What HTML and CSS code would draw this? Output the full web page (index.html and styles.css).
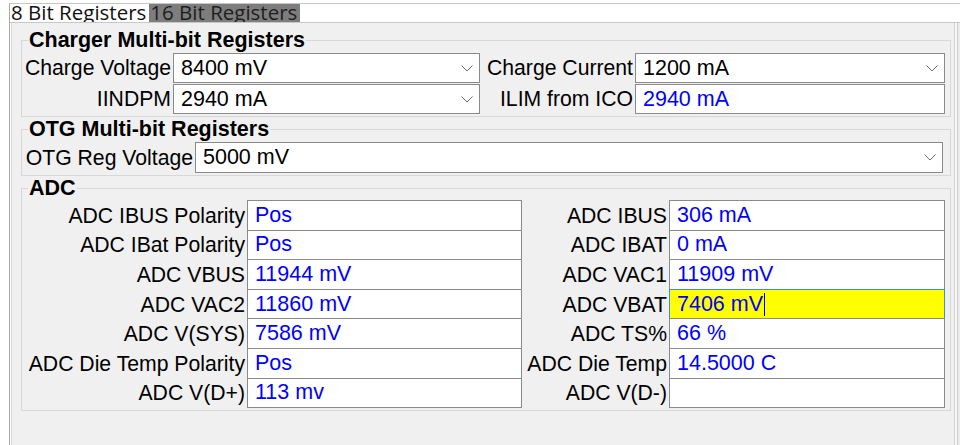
FILE: index.html
```html
<!DOCTYPE html>
<html>
<head>
<meta charset="utf-8">
<link rel="stylesheet" href="styles.css">
</head>
<body>
<div class="app">
  <div class="gutter"></div>
  <div class="frame">
    <div class="tabs">
      <span class="tab active">8 Bit Registers</span><span class="tab dim">16 Bit Registers</span>
    </div>
    <div class="page">
      <div class="panel">
        <fieldset class="group">
          <legend>Charger Multi-bit Registers</legend>
          <div class="grid grid-charger">
            <span class="lbl">Charge Voltage</span>
            <div class="box combo"><span class="val">8400 mV</span><svg class="chev" width="12" height="7" viewBox="0 0 12 7"><polyline points="0.5,0.5 6,6 11.5,0.5" fill="none" stroke="#6d6d6d" stroke-width="1"/></svg></div>
            <span class="lbl">Charge Current</span>
            <div class="box combo"><span class="val">1200 mA</span><svg class="chev" width="12" height="7" viewBox="0 0 12 7"><polyline points="0.5,0.5 6,6 11.5,0.5" fill="none" stroke="#6d6d6d" stroke-width="1"/></svg></div>
            <span class="lbl">IINDPM</span>
            <div class="box combo"><span class="val">2940 mA</span><svg class="chev" width="12" height="7" viewBox="0 0 12 7"><polyline points="0.5,0.5 6,6 11.5,0.5" fill="none" stroke="#6d6d6d" stroke-width="1"/></svg></div>
            <span class="lbl">ILIM from ICO</span>
            <div class="box"><span class="val blue">2940 mA</span></div>
          </div>
        </fieldset>
        <fieldset class="group">
          <legend>OTG Multi-bit Registers</legend>
          <div class="grid grid-otg">
            <span class="lbl">OTG Reg Voltage</span>
            <div class="box combo"><span class="val">5000 mV</span><svg class="chev" width="12" height="7" viewBox="0 0 12 7"><polyline points="0.5,0.5 6,6 11.5,0.5" fill="none" stroke="#6d6d6d" stroke-width="1"/></svg></div>
          </div>
        </fieldset>
        <fieldset class="group">
          <legend>ADC</legend>
          <div class="grid grid-adc">
            <span class="lbl">ADC IBUS Polarity</span>
            <div class="box"><span class="val blue">Pos</span></div>
            <span class="lbl">ADC IBUS</span>
            <div class="box"><span class="val blue">306 mA</span></div>

            <span class="lbl">ADC IBat Polarity</span>
            <div class="box"><span class="val blue">Pos</span></div>
            <span class="lbl">ADC IBAT</span>
            <div class="box"><span class="val blue">0 mA</span></div>

            <span class="lbl">ADC VBUS</span>
            <div class="box"><span class="val blue">11944 mV</span></div>
            <span class="lbl">ADC VAC1</span>
            <div class="box"><span class="val blue">11909 mV</span></div>

            <span class="lbl">ADC VAC2</span>
            <div class="box"><span class="val blue">11860 mV</span></div>
            <span class="lbl">ADC VBAT</span>
            <div class="box focus"><span class="val blue">7406 mV</span><span class="caret"></span></div>

            <span class="lbl">ADC V(SYS)</span>
            <div class="box"><span class="val blue">7586 mV</span></div>
            <span class="lbl">ADC TS%</span>
            <div class="box"><span class="val blue">66 %</span></div>

            <span class="lbl">ADC Die Temp Polarity</span>
            <div class="box"><span class="val blue">Pos</span></div>
            <span class="lbl">ADC Die Temp</span>
            <div class="box"><span class="val blue">14.5000 C</span></div>

            <span class="lbl">ADC V(D+)</span>
            <div class="box"><span class="val blue">113 mv</span></div>
            <span class="lbl">ADC V(D-)</span>
            <div class="box"><span class="val blue"></span></div>
          </div>
        </fieldset>
      </div>
      <div class="rstrip"></div>
    </div>
  </div>
</div>
</body>
</html>
```
FILE: styles.css
```css
* { box-sizing: border-box; }
html, body { margin: 0; height: 100%; }
body {
  background: #ffffff;
  font-family: "Liberation Sans", Arial, sans-serif;
  color: #000;
  overflow: hidden;
}
.app { display: flex; height: 445px; }
.gutter { width: 9px; flex: none; }
.frame {
  flex: 1;
  display: flex;
  flex-direction: column;
  margin-top: 3px;
  border-top: 1px solid #c6c6c6;
  border-left: 1px solid #a9a9a9;
  min-width: 0;
}
.tabs {
  height: 18px;
  display: flex;
  overflow: hidden;
  flex: none;
}
.tab {
  font-family: "Open Sans", "Noto Sans", sans-serif;
  font-size: 20.5px;
  line-height: 16px;
  height: 18px;
  padding: 0 3px 0 1px;
  white-space: nowrap;
  color: #111;
  overflow: hidden;
}
.tab.active { background: #ffffff; }
.tab.dim { background: #7d7d7d; color: #1e1e1e; }
.page {
  flex: 1;
  display: flex;
  border-top: 1px solid #c8c8c8;
}
.panel {
  flex: 1;
  margin-left: 1px;
  border-left: 1px solid #d9d9d9;
  border-right: 1px solid #d2d2d2;
  background: #f0f0f0;
  padding: 6px 3px 0 9px;
}
.rstrip {
  width: 5px;
  flex: none;
  background: linear-gradient(to right, #f7f7f7 0 2px, #cdcdcd 2px 3px, #ececec 3px);
}
.group {
  margin: 0 0 1px;
  padding: 2px 0 2px 0;
  border: 1px solid #d7d7d7;
  min-width: 0;
}
.group legend {
  font-weight: bold;
  font-size: 21.5px;
  line-height: 22px;
  margin-left: 6px;
  padding: 0 1px;
}
.grid { display: grid; column-gap: 2px; }
.grid-charger {
  grid-template-columns: 149px 307px 151px 310px;
  grid-auto-rows: 30px;
  row-gap: 1px;
}
.grid-otg {
  grid-template-columns: 171px 748px;
  grid-auto-rows: 31px;
}
.grid-adc {
  grid-template-columns: 223px 275px 143px 276px;
  grid-auto-rows: 29.6px;
}
.grid-adc .box { margin-top: -1px; }
.lbl {
  font-size: 21.2px;
  text-align: right;
  align-self: center;
  white-space: nowrap;
}
.box {
  display: flex;
  align-items: center;
  background: #fff;
  border: 1px solid #8a8a8a;
  padding-left: 7px;
  min-width: 0;
}
.val {
  font-size: 21.5px;
  white-space: nowrap;
}
.blue { color: #0000ff; }
.combo .val { flex: 1; }
.chev { margin-right: 6px; flex: none; }
.focus {
  background: #ffff00;
  border-color: #3c8fe0;
}
.caret {
  display: inline-block;
  width: 1px;
  height: 23px;
  background: #000;
  margin-left: 1px;
}
```
